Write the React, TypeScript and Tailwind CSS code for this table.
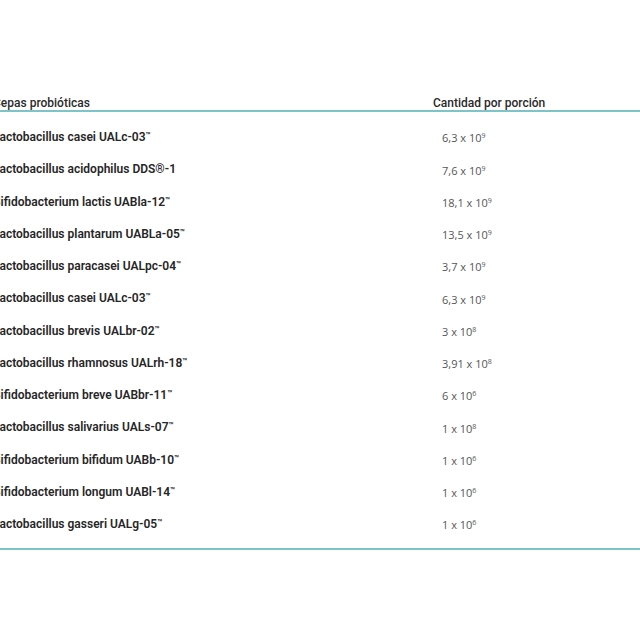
import React from "react";

const rows: [string, string, string][] = [
  ["Lactobacillus casei UALc-03™", "6,3 x 10", "9"],
  ["Lactobacillus acidophilus DDS®-1", "7,6 x 10", "9"],
  ["Bifidobacterium lactis UABla-12™", "18,1 x 10", "9"],
  ["Lactobacillus plantarum UABLa-05™", "13,5 x 10", "9"],
  ["Lactobacillus paracasei UALpc-04™", "3,7 x 10", "9"],
  ["Lactobacillus casei UALc-03™", "6,3 x 10", "9"],
  ["Lactobacillus brevis UALbr-02™", "3 x 10", "8"],
  ["Lactobacillus rhamnosus UALrh-18™", "3,91 x 10", "8"],
  ["Bifidobacterium breve UABbr-11™", "6 x 10", "6"],
  ["Lactobacillus salivarius UALs-07™", "1 x 10", "8"],
  ["Bifidobacterium bifidum UABb-10™", "1 x 10", "6"],
  ["Bifidobacterium longum UABl-14™", "1 x 10", "6"],
  ["Lactobacillus gasseri UALg-05™", "1 x 10", "6"],
];

function Name({ text }: { text: string }) {
  const parts = text.split(/(™)/);
  return (
    <>
      {parts.map((p, i) =>
        p === "™" ? (
          <span key={i} className="text-[8px] align-[3px]">
            ™
          </span>
        ) : (
          <React.Fragment key={i}>{p}</React.Fragment>
        )
      )}
    </>
  );
}

export default function App() {
  return (
    <div className="w-[640px] h-[640px] bg-white overflow-hidden pt-[95px]">
      <div className="flex items-end h-[17px] border-b-2 border-[#7dc3c9] font-['Roboto',sans-serif] text-[12px] font-medium text-[#2a2a2a] leading-none pb-[1px]">
        <div className="w-[433px] -ml-[7px] pl-0 shrink-0">Cepas probióticas</div>
        <div className="pl-[7px]">Cantidad por porción</div>
      </div>
      <div className="pt-[9px] pb-[8px] border-b-2 border-[#7dc3c9]">
        {rows.map(([name, val, exp], i) => (
          <div key={i} className="flex items-center h-[32.25px]">
            <div className="w-[433px] -ml-[7px] shrink-0 font-['Roboto',sans-serif] text-[12px] font-semibold text-[#262626]">
              <Name text={name} />
            </div>
            <div className="pl-[16px] pt-[3px] font-['Open_Sans',sans-serif] text-[11px] text-[#555]">
              {val}
              <span className="text-[7px] align-[4px] leading-none">{exp}</span>
            </div>
          </div>
        ))}
      </div>
    </div>
  );
}
